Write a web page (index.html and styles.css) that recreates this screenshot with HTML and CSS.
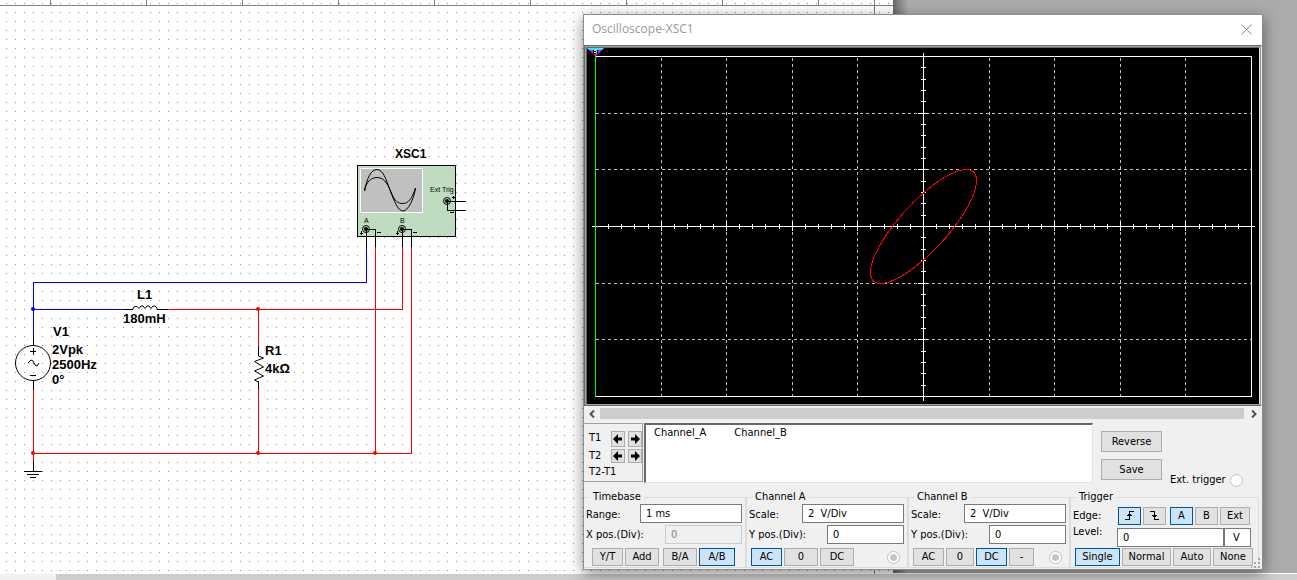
FILE: index.html
```html
<!DOCTYPE html>
<html lang="en">
<head>
<meta charset="utf-8">
<title>Oscilloscope-XSC1</title>
<link rel="stylesheet" href="styles.css">
</head>
<body>
<main class="workspace">
  <section class="sheet" aria-label="Circuit schematic">
    <svg class="schematic" width="100%" height="100%">
      <defs>
        <pattern id="dots" x="6" y="3" width="9" height="9" patternUnits="userSpaceOnUse"><rect width="1" height="1" fill="#8c8c8c"/></pattern>
        <pattern id="ruler" x="50" y="0" width="96" height="5" patternUnits="userSpaceOnUse"><rect width="1" height="5" fill="#808080"/></pattern>
        <g id="jack"><circle r="3.5" fill="none" stroke="#000"/><circle r="2" fill="#000"/></g>
      </defs>
      <rect width="100%" height="100%" fill="url(#dots)"/>
      <rect width="875" height="5" fill="url(#ruler)"/>
      <g class="crisp" stroke="#808080"><path d="M0 5.500H893M874.500 0V574"/></g>

      <g class="crisp" fill="none">
        <path stroke="#00f" d="M366.500 246V282.500H33.500V337M33 309.500H124"/>
        <path stroke="#f00" d="M168 309.500H402.500V246M258.500 309V346M258.500 389V453M375.500 246V453M411.500 246V453.500H33M33.500 390V462"/>
        <path stroke="#000" d="M124 309.500H133M157 309.500H168M258.500 346V355M258.500 381V389M33.500 337V345M33.500 381V390M33.500 462V471M24 471.500H42M27 474.500H39M30 477.500H36"/>
      </g>
      <path class="ink" d="M133 309.500V308L135 306.500H137L139 308.500L141 306H143L145 308.500L147 306H149L151 308.500L153 306H155L157 308V309.500"/>
      <path class="ink" d="M258.500 354V356L263.500 358L254.500 361.500L263.500 367L254.500 371L263.500 376L254.500 380L258.500 382"/>
      <circle class="ink" cx="33" cy="363" r="17.500"/>
      <path class="ink" d="M30 351.500H36M33.500 348V355M30 375.500H36M28 363L31 360L33 361L35 365L37 366L39 363"/>
      <circle cx="33" cy="309" r="2" fill="#00f"/>
      <g fill="#f00"><circle cx="258" cy="309" r="2"/><circle cx="33" cy="453" r="2"/><circle cx="258" cy="453" r="2"/><circle cx="375" cy="453" r="2"/></g>

      <rect class="crisp" x="357.500" y="165.500" width="98" height="71" fill="#c0dcc0" stroke="#000"/>
      <rect class="crisp" x="360.500" y="168.500" width="62" height="44" fill="#c0c0c0" stroke="#fff"/>
      <path class="ink" d="M364.500 191C367 178 371 169.500 377 169.500S386 179 390 190S398 211 403 211S414 199 415.500 188M364.500 191C366 182 371 177.500 377 177.500S387 182 391 192S398 203.500 403 203.500S412 199 415.500 188"/>
      <path class="ink crisp" d="M366.500 229V247M366 229.500H375.500V247M402.500 229V247M402 229.500H411.500V247M447 201.500H466M447.500 201V210.500H466M361.500 231V235M360 233.500H363M377 232.500H381M397.500 231V235M396 233.500H399M413 232.500H417M453.500 196V199M452 197.500H455M450 212.500H454"/>
      <use href="#jack" x="366" y="229"/><use href="#jack" x="402" y="229"/><use href="#jack" x="447" y="201"/>
      <g class="tiny"><text x="364" y="223">A</text><text x="400" y="223">B</text><text x="430" y="192">Ext Trig</text></g>
      <g class="part">
        <text class="device" x="395" y="158">XSC1</text>
        <text x="137" y="299">L1</text><text x="123" y="323">180mH</text>
        <text x="53" y="336">V1</text><text x="52" y="354">2Vpk</text><text x="52" y="369">2500Hz</text><text x="52" y="384">0°</text>
        <text x="265" y="355">R1</text><text x="265" y="373">4kΩ</text>
      </g>
    </svg>
  </section>
  <div class="desk"></div>

  <section class="window" aria-label="Oscilloscope-XSC1">
    <header class="titlebar">
      <h1>Oscilloscope-XSC1</h1>
      <button class="close" aria-label="Close"><svg width="11" height="11"><path d="M.5 .5L10.500 10.500M10.500 .5L.5 10.500" stroke="#8c8c8c" fill="none"/></svg></button>
    </header>
    <div class="screen">
      <svg viewBox="587 48 672 356" role="img" aria-label="Lissajous trace">
        <g class="crisp" fill="none">
          <path class="grid" d="M661.500 58V396M726.500 58V396M792.500 58V396M857.500 58V396M989.500 58V396M1054.500 58V396M1120.500 58V396M1185.500 58V396M596 113.500H1251M596 169.500H1251M596 283.500H1251M596 339.500H1251"/>
          <path stroke="#fff" d="M595 56.500H1251.500V396.500H595M592 226.500H1255M923.500 53V401"/>
          <path stroke="#0f0" d="M595.500 56V397"/>
          <path stroke="#fff" id="ticks" d="M608.500 224v5M621.500 224v5M634.500 224v5M648.500 224v5M661.500 222v9M674.500 224v5M687.500 224v5M700.500 224v5M713.500 224v5M726.500 222v9M739.500 224v5M752.500 224v5M765.500 224v5M779.500 224v5M792.500 222v9M805.500 224v5M818.500 224v5M831.500 224v5M844.500 224v5M857.500 222v9M870.500 224v5M884.500 224v5M897.500 224v5M910.500 224v5M936.500 224v5M949.500 224v5M962.500 224v5M975.500 224v5M989.500 222v9M1002.500 224v5M1015.500 224v5M1028.500 224v5M1041.500 224v5M1054.500 222v9M1067.500 224v5M1080.500 224v5M1094.500 224v5M1107.500 224v5M1120.500 222v9M1133.500 224v5M1146.500 224v5M1159.500 224v5M1172.500 224v5M1185.500 222v9M1199.500 224v5M1212.500 224v5M1225.500 224v5M1238.500 224v5"/>
          <path stroke="#fff" d="M921 67.500h5M921 79.500h5M921 90.500h5M921 101.500h5M918 113.500h10M921 124.500h5M921 135.500h5M921 147.500h5M921 158.500h5M918 169.500h10M921 181.500h5M921 192.500h5M921 203.500h5M921 215.500h5M921 237.500h5M921 249.500h5M921 260.500h5M921 271.500h5M918 283.500h10M921 294.500h5M921 305.500h5M921 317.500h5M921 328.500h5M918 339.500h10M921 351.500h5M921 362.500h5M921 373.500h5M921 385.500h5"/>
        </g>
        <circle class="crisp" r="1" transform="matrix(0 -33.500 53 -46.100 923.500 226.500)" fill="none" stroke="#f00" vector-effect="non-scaling-stroke"/>
        <path d="M587 48H604L596 56H595Z" fill="#f0f"/><path d="M587 48H604L602 50H589Z" fill="#0ff"/>
        <path d="M593 50H598V54H593Z" fill="#000"/><path d="M594 50H596V51H594ZM594 52H596V53H594Z" fill="#ff0"/><path d="M596 50H597V54H596Z" fill="#0ff"/>
      </svg>
    </div>
    <div class="timebar">
      <button aria-label="Scroll left"><svg width="6" height="8"><path d="M5 .5L1.500 4L5 7.500" class="chev"/></svg></button>
      <div class="thumb"></div>
      <button class="right" aria-label="Scroll right"><svg width="6" height="8"><path d="M1 .5L4.500 4L1 7.500" class="chev"/></svg></button>
    </div>

    <div class="readings">
      <div class="cursors">
        <span>T1</span>
        <button aria-label="T1 left"><svg width="10" height="10"><path d="M0 5L5 0V3.500H9V6.500H5V10Z"/></svg></button>
        <button aria-label="T1 right"><svg width="10" height="10"><path d="M10 5L5 0V3.500H1V6.500H5V10Z"/></svg></button>
        <span>T2</span>
        <button aria-label="T2 left"><svg width="10" height="10"><path d="M0 5L5 0V3.500H9V6.500H5V10Z"/></svg></button>
        <button aria-label="T2 right"><svg width="10" height="10"><path d="M10 5L5 0V3.500H1V6.500H5V10Z"/></svg></button>
        <span class="delta">T2-T1</span>
      </div>
      <div class="values"><span>Channel_A</span><span>Channel_B</span></div>
      <div class="actions">
        <button class="btn">Reverse</button>
        <button class="btn">Save</button>
      </div>
      <label class="ext">Ext. trigger <input type="radio" name="ext"></label>
    </div>

    <div class="groups">
      <fieldset class="timebase">
        <legend>Timebase</legend>
        <div class="row first"><label for="range">Range:</label><input id="range" class="field wide" value="1 ms"></div>
        <div class="row"><label for="xpos">X pos.(Div):</label><input id="xpos" class="field" value="0" disabled></div>
        <div class="buttons"><button class="btn">Y/T</button><button class="btn w34">Add</button><button class="btn w34 apart">B/A</button><button class="btn w36 on">A/B</button></div>
      </fieldset>
      <fieldset>
        <legend>Channel A</legend>
        <div class="row first"><label for="sa">Scale:</label><input id="sa" class="field wide" value="2  V/Div"></div>
        <div class="row"><label for="ya">Y pos.(Div):</label><input id="ya" class="field" value="0"></div>
        <div class="buttons"><button class="btn on">AC</button><button class="btn w34">0</button><button class="btn w34">DC</button><input class="dot" type="radio" name="cha" checked disabled aria-label="Channel A input"></div>
      </fieldset>
      <fieldset>
        <legend>Channel B</legend>
        <div class="row first"><label for="sb">Scale:</label><input id="sb" class="field wide" value="2  V/Div"></div>
        <div class="row"><label for="yb">Y pos.(Div):</label><input id="yb" class="field" value="0"></div>
        <div class="buttons"><button class="btn">AC</button><button class="btn w28">0</button><button class="btn on">DC</button><button class="btn w26">-</button><input class="dot" type="radio" name="chb" checked disabled aria-label="Channel B input"></div>
      </fieldset>
      <fieldset class="trigger">
        <legend>Trigger</legend>
        <div class="row edge"><span class="name">Edge:</span>
          <button class="btn on" aria-label="Rising edge"><svg width="10" height="9"><path class="ink crisp" d="M0 8.500H4.500V.5H9M2 4.500H7M3 3.500H6"/></svg></button>
          <button class="btn" aria-label="Falling edge"><svg width="10" height="9"><path class="ink crisp" d="M0 .5H4.500V8.500H9M2 4.500H7M3 5.500H6"/></svg></button>
          <button class="btn on apart">A</button><button class="btn">B</button><button class="btn w30">Ext</button>
        </div>
        <div class="row level"><label for="lvl">Level:</label><input id="lvl" class="field" value="0"><input class="field unit" value="V" aria-label="Level unit"></div>
        <div class="buttons"><button class="btn w46 on">Single</button><button class="btn w50">Normal</button><button class="btn w38">Auto</button><button class="btn w40">None</button></div>
      </fieldset>
    </div>
    <svg class="grip" width="10" height="10" fill="#a8a8a8"><path d="M7 0h2v2h-2zM7 4h2v2h-2zM3 4h2v2h-2zM7 8h2v2h-2zM3 8h2v2h-2zM0 8h1v2h-1z"/></svg>
  </section>
</main>
<footer class="hscroll"><div class="hthumb"></div></footer>
</body>
</html>
```

FILE: styles.css
```css
* { box-sizing: border-box; }
body {
  margin: 0;
  min-height: 100vh;
  display: flex;
  flex-direction: column;
  overflow: hidden;
  font: 11px/14px "DejaVu Sans Condensed", "Noto Sans", sans-serif;
  color: #000;
  background: #fff;
}
button, input { font: inherit; color: inherit; margin: 0; padding: 0; }
button svg, .grip, .screen svg, .schematic { display: block; }

.workspace { position: relative; flex: 1; display: flex; min-height: 574px; }
.sheet { flex: 0 0 893px; background: #fff; }
.desk { flex: 1; background: linear-gradient(90deg, #686868, #ababab 15px); border-bottom: 1px solid #fff; }
.hscroll { height: 6px; padding-left: 56px; background: #f0f0f0; }
.hthumb { height: 100%; background: #cdcdcd; }

.crisp { shape-rendering: crispEdges; }
.ink { fill: none; stroke: #000; }
.part { font: bold 13px "Liberation Sans", sans-serif; }
.device { font-size: 12px; }
.tiny { font: 7px "Liberation Sans", sans-serif; }

.window {
  position: absolute;
  left: 583px;
  top: 14px;
  width: 680px;
  padding-bottom: 1px;
  background: #f0f0f0;
  border: 1px solid #8c8c8c;
  box-shadow: 0 4px 14px rgba(0, 0, 0, .45);
}
.titlebar { display: flex; align-items: center; justify-content: space-between; height: 30px; padding: 0 10px 2px 8px; background: #fff; }
.titlebar h1 { margin: 0; font: 12px/16px "Open Sans", sans-serif; color: #999; }
.close { border: 0; background: none; }
.screen { border: solid #696969; border-width: 3px 3px 2px; border-right-color: #e3e3e3; background: #000; outline: 1px solid #a0a0a0; outline-offset: -2px; }
.grid { stroke: #c0c0c0; stroke-dasharray: 3 3; }

.timebar { display: flex; align-items: center; height: 15px; padding: 0 3px 0 4px; }
.timebar button { width: 12px; padding-left: 1px; border: 0; background: none; }
.timebar .right { width: 15px; padding-left: 7px; }
.chev { fill: none; stroke: #505050; stroke-width: 2; }
.thumb { flex: 1; height: 11px; background: #cdcdcd; }

.readings { display: flex; height: 68px; padding-top: 2px; }
.cursors {
  display: grid;
  grid-template-columns: 19px 14px 14px;
  grid-template-rows: 16px 14px 14px;
  column-gap: 3px;
  row-gap: 2px;
  width: 59px;
  height: 59px;
  padding: 7px 0 0 5px;
  border: 1px solid #a0a0a0;
  border-left: 0;
}
.cursors button { display: grid; place-items: center; border: 1px solid #adadad; background: #e1e1e1; }
.delta { grid-column: 1 / -1; }
.values { display: flex; gap: 28px; width: 449px; height: 60px; margin-left: 1px; padding: 1px 0 0 8px; background: #fff; border: 1px solid #e3e3e3; border-top: 2px solid #696969; border-left: 2px solid #696969; }
.actions { display: flex; flex-direction: column; gap: 7px; width: 61px; margin: 8px 0 0 8px; }
.actions .btn { width: 100%; height: 21px; }
.ext { display: flex; align-items: center; gap: 4px; height: 14px; margin: 50px 0 0 8px; }
input[type="radio"] { appearance: none; width: 13px; height: 13px; border: 1px solid #c0c0c0; border-radius: 50%; background: #fff; }
input[type="radio"]:checked { background: radial-gradient(#c4c4c4 3px, #fff 4px); }

.btn { display: grid; place-items: center; width: 31px; height: 18px; border: 1px solid #adadad; background: #e1e1e1; }
.btn.on { border-color: #005499; background: #cce4f7; }
.w26 { width: 25px; }
.w28 { width: 28px; }
.w30 { width: 30px; }
.w34 { width: 34px; }
.w36 { width: 36px; }
.w38 { width: 38px; }
.w40 { width: 40px; }
.w46 { width: 45px; }
.w50 { width: 49px; }

.groups { display: grid; grid-template-columns: 162px 162px 162px 1fr; padding: 1px 3px 0 0; }
fieldset { min-width: 0; height: 78px; margin: 0; padding: 0 3px 0 2px; border: 1px solid #dcdcdc; }
legend { height: 14px; margin-left: 3px; padding: 0 3px; }
.timebase { border-left: 0; }
.timebase legend { margin-left: 4px; }
.row { display: flex; align-items: center; justify-content: space-between; height: 19px; margin-bottom: 2px; }
.first label { padding-top: 3px; }
.field { width: 77px; height: 19px; padding: 0 0 0 5px; border: 1px solid #7a7a7a; border-radius: 0; background: #fff; white-space: pre; }
.field.wide { width: 102px; }
.field:disabled { border-color: #ccc; background: #f0f0f0; color: #838383; }
.buttons { display: flex; align-items: center; gap: 2px; margin-top: 4px; padding-left: 2px; }
.timebase .buttons { padding-left: 6px; }
.buttons .apart { margin-left: 2px; }
.dot { margin: 0 4px 0 auto; }
.trigger .row { justify-content: flex-start; }
.edge { gap: 2px; padding-top: 4px; }
.edge .name { width: 43px; }
.edge .btn { width: 23px; }
.edge .btn.w30 { width: 30px; }
.edge .apart { margin-left: 2px; }
.level { align-items: flex-start; }
.level label { width: 44px; }
.level .field { width: 107px; margin-top: 3px; }
.level .field.unit { width: 27px; padding-left: 8px; }
.grip { position: absolute; right: 1px; bottom: 1px; }
```
